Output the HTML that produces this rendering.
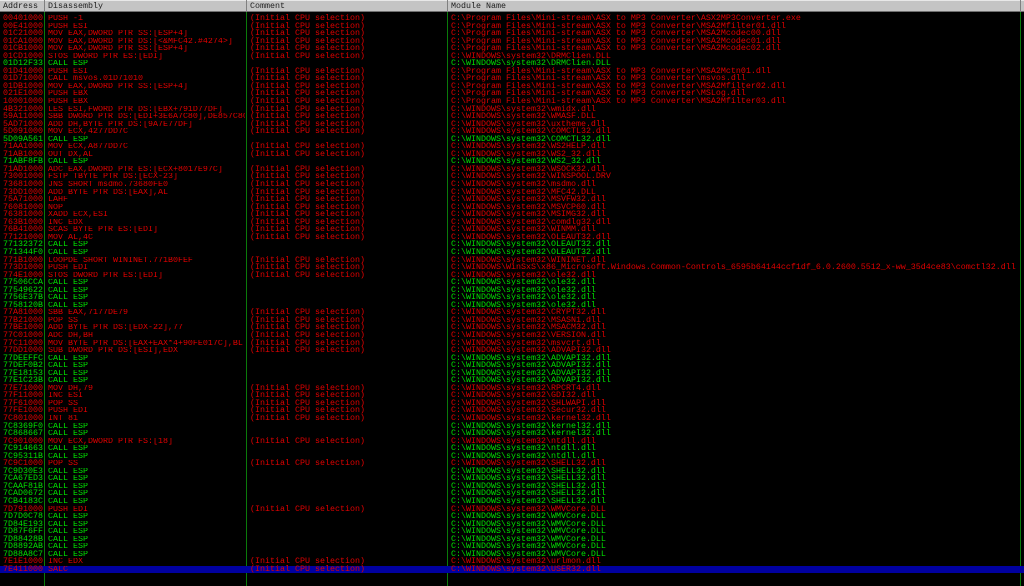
<!DOCTYPE html>
<html><head><meta charset="utf-8"><style>
html,body{margin:0;padding:0;background:#000;width:1024px;height:586px;overflow:hidden}
body{position:relative;font-family:"Liberation Mono","DejaVu Sans Mono",monospace;font-size:8.33px}
.hdr{position:absolute;left:0;top:0;width:1024px;height:12px;background:#c4c4c4;border-top:1px solid #e8e8e8;border-bottom:1px solid #707070;box-sizing:border-box}
.hdr span{position:absolute;top:0;line-height:11px;color:#202020}
.hs{position:absolute;top:0;width:1px;height:12px;background:#808080}
.vl{position:absolute;top:12px;width:1px;height:574px;background:#0a7a0a}
.rows{position:absolute;left:0;top:15px;width:1024px}
.r{position:relative;height:7.56px;line-height:7.56px;white-space:nowrap}
.r span{position:absolute;top:0}
.a{left:3px}.d{left:48px;width:197px;overflow:hidden}.c{left:250px;color:#e00000}.m{left:451px}
.R{color:#e00000}.G{color:#00e000}
.sel{background:#0000a0}
</style></head><body>
<div class="hdr"><span style="left:3px">Address</span><span style="left:48px">Disassembly</span><span style="left:250px">Comment</span><span style="left:451px">Module Name</span></div>
<div class="hs" style="left:44px"></div><div class="hs" style="left:246px"></div><div class="hs" style="left:447px"></div><div class="hs" style="left:1020px"></div>
<div class="vl" style="left:44px"></div><div class="vl" style="left:246px"></div><div class="vl" style="left:447px"></div><div class="vl" style="left:1020px"></div>
<div class="rows">
<div class="r R"><span class="a">00401000</span><span class="d">PUSH -1</span><span class="c">(Initial CPU selection)</span><span class="m">C:\Program Files\Mini-stream\ASX to MP3 Converter\ASX2MP3Converter.exe</span></div>
<div class="r R"><span class="a">00E41000</span><span class="d">PUSH ESI</span><span class="c">(Initial CPU selection)</span><span class="m">C:\Program Files\Mini-stream\ASX to MP3 Converter\MSA2Mfilter01.dll</span></div>
<div class="r R"><span class="a">01C21000</span><span class="d">MOV EAX,DWORD PTR SS:[ESP+4]</span><span class="c">(Initial CPU selection)</span><span class="m">C:\Program Files\Mini-stream\ASX to MP3 Converter\MSA2Mcodec00.dll</span></div>
<div class="r R"><span class="a">01CA1000</span><span class="d">MOV EAX,DWORD PTR DS:[&lt;&amp;MFC42.#4274&gt;]</span><span class="c">(Initial CPU selection)</span><span class="m">C:\Program Files\Mini-stream\ASX to MP3 Converter\MSA2Mcodec01.dll</span></div>
<div class="r R"><span class="a">01CB1000</span><span class="d">MOV EAX,DWORD PTR SS:[ESP+4]</span><span class="c">(Initial CPU selection)</span><span class="m">C:\Program Files\Mini-stream\ASX to MP3 Converter\MSA2Mcodec02.dll</span></div>
<div class="r R"><span class="a">01CD1000</span><span class="d">STOS DWORD PTR ES:[EDI]</span><span class="c">(Initial CPU selection)</span><span class="m">C:\WINDOWS\system32\DRMClien.DLL</span></div>
<div class="r G"><span class="a">01D12F33</span><span class="d">CALL ESP</span><span class="m">C:\WINDOWS\system32\DRMClien.DLL</span></div>
<div class="r R"><span class="a">01D41000</span><span class="d">PUSH ESI</span><span class="c">(Initial CPU selection)</span><span class="m">C:\Program Files\Mini-stream\ASX to MP3 Converter\MSA2Mctn01.dll</span></div>
<div class="r R"><span class="a">01D71000</span><span class="d">CALL msvos.01D71010</span><span class="c">(Initial CPU selection)</span><span class="m">C:\Program Files\Mini-stream\ASX to MP3 Converter\msvos.dll</span></div>
<div class="r R"><span class="a">01DB1000</span><span class="d">MOV EAX,DWORD PTR SS:[ESP+4]</span><span class="c">(Initial CPU selection)</span><span class="m">C:\Program Files\Mini-stream\ASX to MP3 Converter\MSA2Mfilter02.dll</span></div>
<div class="r R"><span class="a">021E1000</span><span class="d">PUSH EBX</span><span class="c">(Initial CPU selection)</span><span class="m">C:\Program Files\Mini-stream\ASX to MP3 Converter\MSLog.dll</span></div>
<div class="r R"><span class="a">10001000</span><span class="d">PUSH EBX</span><span class="c">(Initial CPU selection)</span><span class="m">C:\Program Files\Mini-stream\ASX to MP3 Converter\MSA2Mfilter03.dll</span></div>
<div class="r R"><span class="a">4B321000</span><span class="d">LES ESI,FWORD PTR DS:[EBX+791D77DF]</span><span class="c">(Initial CPU selection)</span><span class="m">C:\WINDOWS\system32\wmidx.dll</span></div>
<div class="r R"><span class="a">59A11000</span><span class="d">SBB DWORD PTR DS:[EDI+3E6A7C80],DE857C80</span><span class="c">(Initial CPU selection)</span><span class="m">C:\WINDOWS\system32\WMASF.DLL</span></div>
<div class="r R"><span class="a">5AD71000</span><span class="d">ADD DH,BYTE PTR DS:[9A7E77DF]</span><span class="c">(Initial CPU selection)</span><span class="m">C:\WINDOWS\system32\uxtheme.dll</span></div>
<div class="r R"><span class="a">5D091000</span><span class="d">MOV ECX,4277DD7C</span><span class="c">(Initial CPU selection)</span><span class="m">C:\WINDOWS\system32\COMCTL32.dll</span></div>
<div class="r G"><span class="a">5D09A561</span><span class="d">CALL ESP</span><span class="m">C:\WINDOWS\system32\COMCTL32.dll</span></div>
<div class="r R"><span class="a">71AA1000</span><span class="d">MOV ECX,A877DD7C</span><span class="c">(Initial CPU selection)</span><span class="m">C:\WINDOWS\system32\WS2HELP.dll</span></div>
<div class="r R"><span class="a">71AB1000</span><span class="d">OUT DX,AL</span><span class="c">(Initial CPU selection)</span><span class="m">C:\WINDOWS\system32\WS2_32.dll</span></div>
<div class="r G"><span class="a">71ABF8FB</span><span class="d">CALL ESP</span><span class="m">C:\WINDOWS\system32\WS2_32.dll</span></div>
<div class="r R"><span class="a">71AD1000</span><span class="d">ADC EAX,DWORD PTR ES:[ECX+8017E97C]</span><span class="c">(Initial CPU selection)</span><span class="m">C:\WINDOWS\system32\WSOCK32.dll</span></div>
<div class="r R"><span class="a">73001000</span><span class="d">FSTP TBYTE PTR DS:[ECX-23]</span><span class="c">(Initial CPU selection)</span><span class="m">C:\WINDOWS\system32\WINSPOOL.DRV</span></div>
<div class="r R"><span class="a">73681000</span><span class="d">JNS SHORT msdmo.73680FE0</span><span class="c">(Initial CPU selection)</span><span class="m">C:\WINDOWS\system32\msdmo.dll</span></div>
<div class="r R"><span class="a">73DD1000</span><span class="d">ADD BYTE PTR DS:[EAX],AL</span><span class="c">(Initial CPU selection)</span><span class="m">C:\WINDOWS\system32\MFC42.DLL</span></div>
<div class="r R"><span class="a">75A71000</span><span class="d">LAHF</span><span class="c">(Initial CPU selection)</span><span class="m">C:\WINDOWS\system32\MSVFW32.dll</span></div>
<div class="r R"><span class="a">76081000</span><span class="d">NOP</span><span class="c">(Initial CPU selection)</span><span class="m">C:\WINDOWS\system32\MSVCP60.dll</span></div>
<div class="r R"><span class="a">76381000</span><span class="d">XADD ECX,ESI</span><span class="c">(Initial CPU selection)</span><span class="m">C:\WINDOWS\system32\MSIMG32.dll</span></div>
<div class="r R"><span class="a">763B1000</span><span class="d">INC EDX</span><span class="c">(Initial CPU selection)</span><span class="m">C:\WINDOWS\system32\comdlg32.dll</span></div>
<div class="r R"><span class="a">76B41000</span><span class="d">SCAS BYTE PTR ES:[EDI]</span><span class="c">(Initial CPU selection)</span><span class="m">C:\WINDOWS\system32\WINMM.dll</span></div>
<div class="r R"><span class="a">77121000</span><span class="d">MOV AL,4C</span><span class="c">(Initial CPU selection)</span><span class="m">C:\WINDOWS\system32\OLEAUT32.dll</span></div>
<div class="r G"><span class="a">77132372</span><span class="d">CALL ESP</span><span class="m">C:\WINDOWS\system32\OLEAUT32.dll</span></div>
<div class="r G"><span class="a">771344F0</span><span class="d">CALL ESP</span><span class="m">C:\WINDOWS\system32\OLEAUT32.dll</span></div>
<div class="r R"><span class="a">771B1000</span><span class="d">LOOPDE SHORT WININET.771B0FEF</span><span class="c">(Initial CPU selection)</span><span class="m">C:\WINDOWS\system32\WININET.dll</span></div>
<div class="r R"><span class="a">773D1000</span><span class="d">PUSH EDI</span><span class="c">(Initial CPU selection)</span><span class="m">C:\WINDOWS\WinSxS\x86_Microsoft.Windows.Common-Controls_6595b64144ccf1df_6.0.2600.5512_x-ww_35d4ce83\comctl32.dll</span></div>
<div class="r R"><span class="a">774E1000</span><span class="d">STOS DWORD PTR ES:[EDI]</span><span class="c">(Initial CPU selection)</span><span class="m">C:\WINDOWS\system32\ole32.dll</span></div>
<div class="r G"><span class="a">77506CCA</span><span class="d">CALL ESP</span><span class="m">C:\WINDOWS\system32\ole32.dll</span></div>
<div class="r G"><span class="a">77549622</span><span class="d">CALL ESP</span><span class="m">C:\WINDOWS\system32\ole32.dll</span></div>
<div class="r G"><span class="a">7756E37B</span><span class="d">CALL ESP</span><span class="m">C:\WINDOWS\system32\ole32.dll</span></div>
<div class="r G"><span class="a">7758120B</span><span class="d">CALL ESP</span><span class="m">C:\WINDOWS\system32\ole32.dll</span></div>
<div class="r R"><span class="a">77A81000</span><span class="d">SBB EAX,7177DE79</span><span class="c">(Initial CPU selection)</span><span class="m">C:\WINDOWS\system32\CRYPT32.dll</span></div>
<div class="r R"><span class="a">77B21000</span><span class="d">POP SS</span><span class="c">(Initial CPU selection)</span><span class="m">C:\WINDOWS\system32\MSASN1.dll</span></div>
<div class="r R"><span class="a">77BE1000</span><span class="d">ADD BYTE PTR DS:[EDX-22],77</span><span class="c">(Initial CPU selection)</span><span class="m">C:\WINDOWS\system32\MSACM32.dll</span></div>
<div class="r R"><span class="a">77C01000</span><span class="d">ADC DH,BH</span><span class="c">(Initial CPU selection)</span><span class="m">C:\WINDOWS\system32\VERSION.dll</span></div>
<div class="r R"><span class="a">77C11000</span><span class="d">MOV BYTE PTR DS:[EAX+EAX*4+90FE017C],BL</span><span class="c">(Initial CPU selection)</span><span class="m">C:\WINDOWS\system32\msvcrt.dll</span></div>
<div class="r R"><span class="a">77DD1000</span><span class="d">SUB DWORD PTR DS:[ESI],EDX</span><span class="c">(Initial CPU selection)</span><span class="m">C:\WINDOWS\system32\ADVAPI32.dll</span></div>
<div class="r G"><span class="a">77DEEFFC</span><span class="d">CALL ESP</span><span class="m">C:\WINDOWS\system32\ADVAPI32.dll</span></div>
<div class="r G"><span class="a">77DEF0B2</span><span class="d">CALL ESP</span><span class="m">C:\WINDOWS\system32\ADVAPI32.dll</span></div>
<div class="r G"><span class="a">77E18153</span><span class="d">CALL ESP</span><span class="m">C:\WINDOWS\system32\ADVAPI32.dll</span></div>
<div class="r G"><span class="a">77E1C23B</span><span class="d">CALL ESP</span><span class="m">C:\WINDOWS\system32\ADVAPI32.dll</span></div>
<div class="r R"><span class="a">77E71000</span><span class="d">MOV DH,79</span><span class="c">(Initial CPU selection)</span><span class="m">C:\WINDOWS\system32\RPCRT4.dll</span></div>
<div class="r R"><span class="a">77F11000</span><span class="d">INC ESI</span><span class="c">(Initial CPU selection)</span><span class="m">C:\WINDOWS\system32\GDI32.dll</span></div>
<div class="r R"><span class="a">77F61000</span><span class="d">POP SS</span><span class="c">(Initial CPU selection)</span><span class="m">C:\WINDOWS\system32\SHLWAPI.dll</span></div>
<div class="r R"><span class="a">77FE1000</span><span class="d">PUSH EDI</span><span class="c">(Initial CPU selection)</span><span class="m">C:\WINDOWS\system32\Secur32.dll</span></div>
<div class="r R"><span class="a">7C801000</span><span class="d">INT 81</span><span class="c">(Initial CPU selection)</span><span class="m">C:\WINDOWS\system32\kernel32.dll</span></div>
<div class="r G"><span class="a">7C8369F0</span><span class="d">CALL ESP</span><span class="m">C:\WINDOWS\system32\kernel32.dll</span></div>
<div class="r G"><span class="a">7C868667</span><span class="d">CALL ESP</span><span class="m">C:\WINDOWS\system32\kernel32.dll</span></div>
<div class="r R"><span class="a">7C901000</span><span class="d">MOV ECX,DWORD PTR FS:[18]</span><span class="c">(Initial CPU selection)</span><span class="m">C:\WINDOWS\system32\ntdll.dll</span></div>
<div class="r G"><span class="a">7C914663</span><span class="d">CALL ESP</span><span class="m">C:\WINDOWS\system32\ntdll.dll</span></div>
<div class="r G"><span class="a">7C95311B</span><span class="d">CALL ESP</span><span class="m">C:\WINDOWS\system32\ntdll.dll</span></div>
<div class="r R"><span class="a">7C9C1000</span><span class="d">POP SS</span><span class="c">(Initial CPU selection)</span><span class="m">C:\WINDOWS\system32\SHELL32.dll</span></div>
<div class="r G"><span class="a">7C9D30E3</span><span class="d">CALL ESP</span><span class="m">C:\WINDOWS\system32\SHELL32.dll</span></div>
<div class="r G"><span class="a">7CA67ED3</span><span class="d">CALL ESP</span><span class="m">C:\WINDOWS\system32\SHELL32.dll</span></div>
<div class="r G"><span class="a">7CAAF81B</span><span class="d">CALL ESP</span><span class="m">C:\WINDOWS\system32\SHELL32.dll</span></div>
<div class="r G"><span class="a">7CAD0672</span><span class="d">CALL ESP</span><span class="m">C:\WINDOWS\system32\SHELL32.dll</span></div>
<div class="r G"><span class="a">7CB4183C</span><span class="d">CALL ESP</span><span class="m">C:\WINDOWS\system32\SHELL32.dll</span></div>
<div class="r R"><span class="a">7D791000</span><span class="d">PUSH EDI</span><span class="c">(Initial CPU selection)</span><span class="m">C:\WINDOWS\system32\WMVCore.DLL</span></div>
<div class="r G"><span class="a">7D7D0C78</span><span class="d">CALL ESP</span><span class="m">C:\WINDOWS\system32\WMVCore.DLL</span></div>
<div class="r G"><span class="a">7D84E193</span><span class="d">CALL ESP</span><span class="m">C:\WINDOWS\system32\WMVCore.DLL</span></div>
<div class="r G"><span class="a">7D87F6FF</span><span class="d">CALL ESP</span><span class="m">C:\WINDOWS\system32\WMVCore.DLL</span></div>
<div class="r G"><span class="a">7D88428B</span><span class="d">CALL ESP</span><span class="m">C:\WINDOWS\system32\WMVCore.DLL</span></div>
<div class="r G"><span class="a">7D8892AB</span><span class="d">CALL ESP</span><span class="m">C:\WINDOWS\system32\WMVCore.DLL</span></div>
<div class="r G"><span class="a">7D88A8C7</span><span class="d">CALL ESP</span><span class="m">C:\WINDOWS\system32\WMVCore.DLL</span></div>
<div class="r R"><span class="a">7E1E1000</span><span class="d">INC EDX</span><span class="c">(Initial CPU selection)</span><span class="m">C:\WINDOWS\system32\urlmon.dll</span></div>
<div class="r R sel"><span class="a">7E411000</span><span class="d">SALC</span><span class="c">(Initial CPU selection)</span><span class="m">C:\WINDOWS\system32\USER32.dll</span></div>
</div>
</body></html>
